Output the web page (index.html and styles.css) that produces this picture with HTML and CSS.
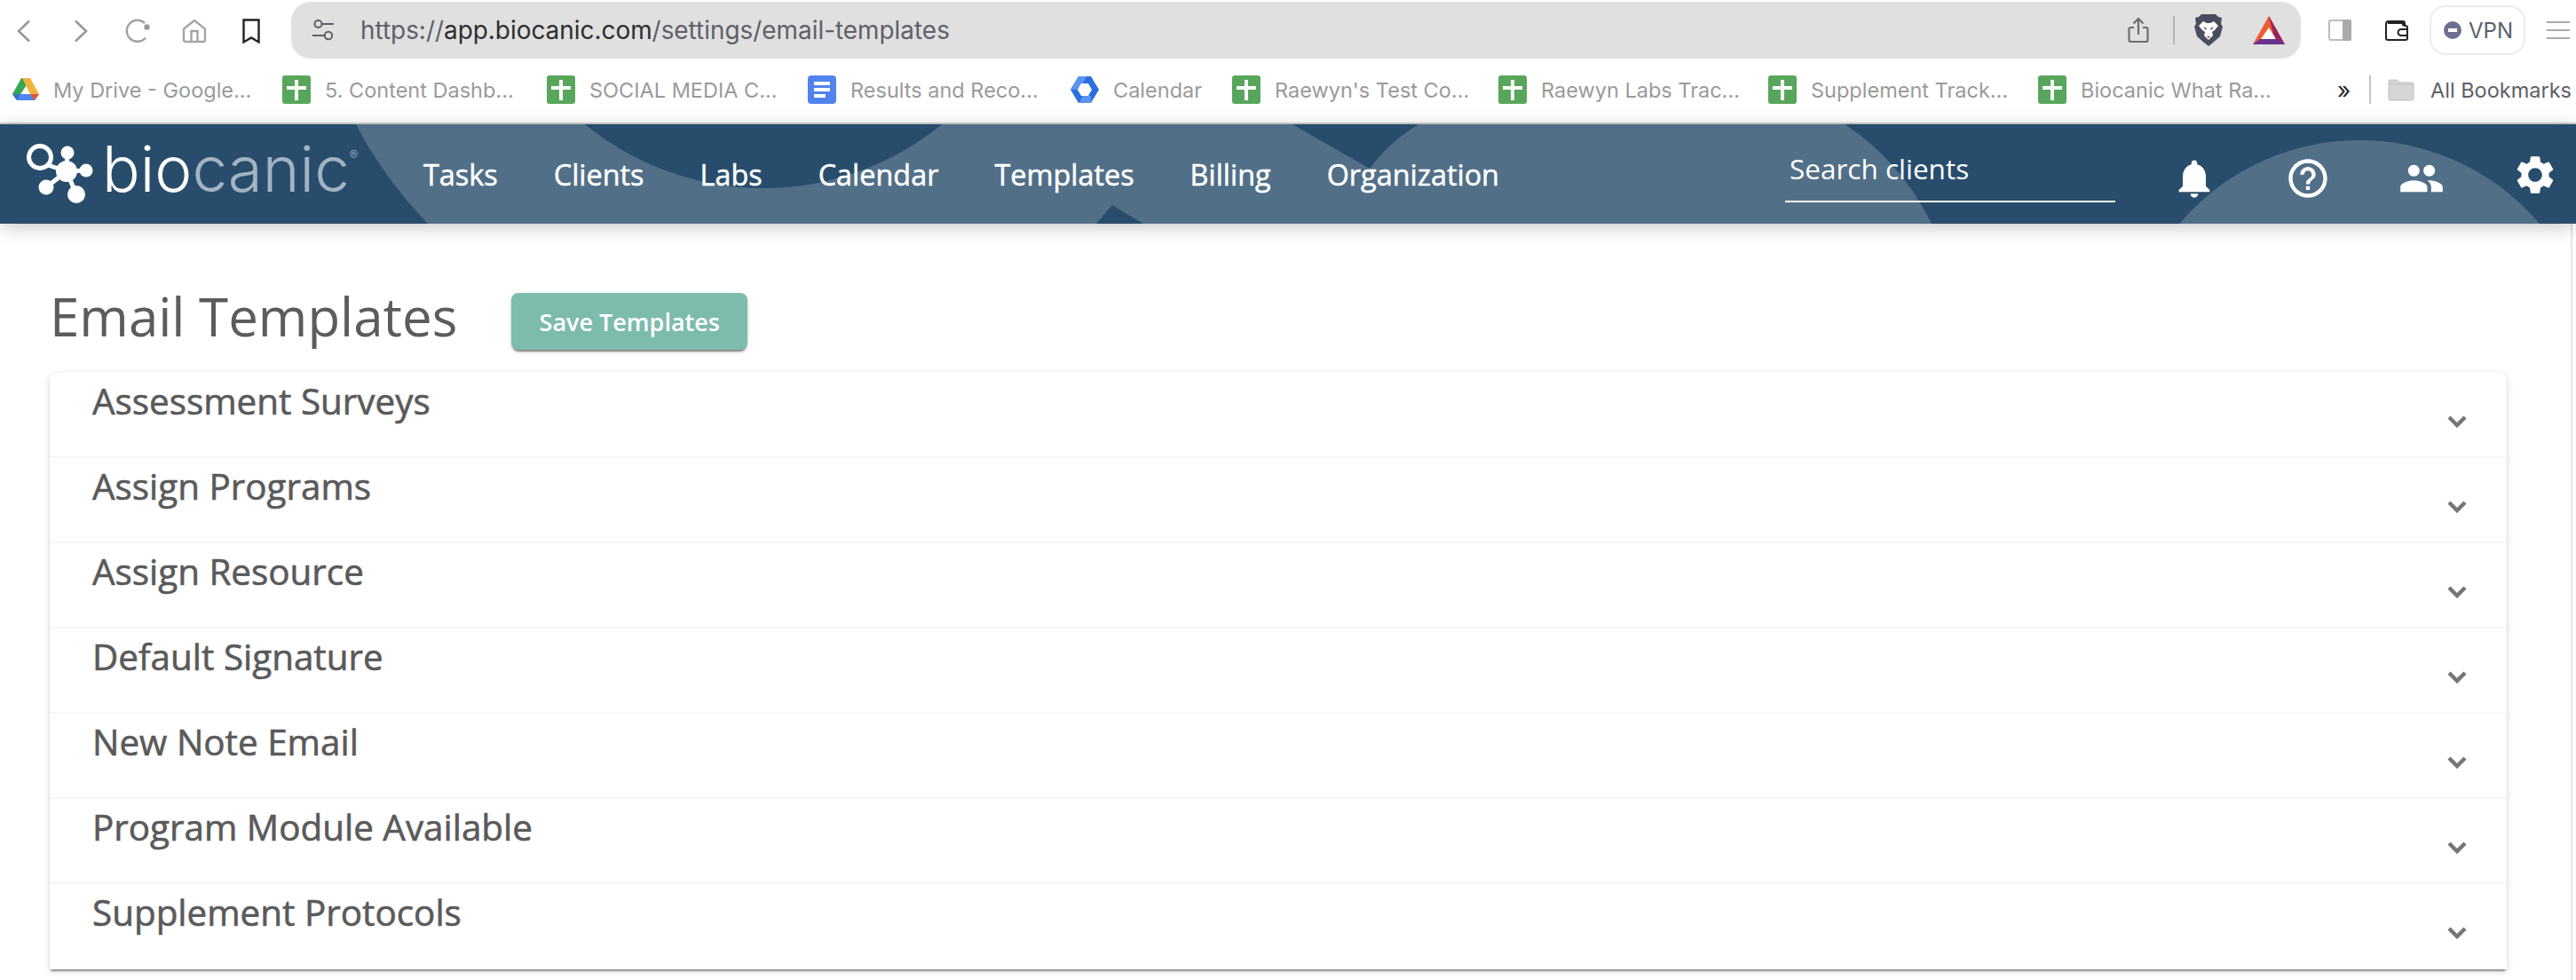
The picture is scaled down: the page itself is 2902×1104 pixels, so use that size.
FILE: index.html
```html
<!DOCTYPE html>
<html lang="en">
<head>
<meta charset="utf-8">
<title>Email Templates</title>
<link rel="stylesheet" href="styles.css">
</head>
<body>
<svg class="defs" width="0" height="0" aria-hidden="true">
  <symbol id="sheet" viewBox="0 0 32 32"><rect width="32" height="32" rx="3" fill="#58a65c"/><path d="M14 5h4v7h9v4h-9v12h-4V16H5v-4h9z" fill="#fff"/></symbol>
  <symbol id="chev" viewBox="0 0 22 14"><path d="M2 2l9 9 9-9" fill="none" stroke="#757575" stroke-width="4.4"/></symbol>
</svg>
<div class="toolbar">
  <svg class="tb" viewBox="0 0 30 30"><path d="M21 3.500L9 15l12 11.500" fill="none" stroke="#999" stroke-width="2.600"/></svg>
  <svg class="tb" viewBox="0 0 30 30"><path d="M9 3.500L21 15 9 26.500" fill="none" stroke="#999" stroke-width="2.600"/></svg>
  <svg class="tb" viewBox="0 0 30 30"><path d="M24 22.500A12 12 0 1 1 23 6" fill="none" stroke="#a0a0a0" stroke-width="2.400"/><circle cx="25.500" cy="10.500" r="3.200" fill="#999"/></svg>
  <svg class="tb" viewBox="0 0 30 30"><path d="M3 12.500L15 3l12 9.500V25a2 2 0 0 1-2 2H5a2 2 0 0 1-2-2zM11.500 27V15h7v12" fill="none" stroke="#a5a5a5" stroke-width="2.400"/></svg>
  <svg class="tb" viewBox="0 0 30 30"><path d="M6.500 2.500h17v25L15 22.500l-8.500 5z" fill="none" stroke="#222" stroke-width="2.400"/></svg>
  <div class="urlbar">
    <svg class="tune" viewBox="0 0 24 24"><circle cx="6.500" cy="5" r="4" fill="none" stroke="#5f6068" stroke-width="2"/><path d="M11 5h13M0 18h13" stroke="#5f6068" stroke-width="2"/><circle cx="18" cy="18" r="4.200" fill="none" stroke="#5f6068" stroke-width="2"/></svg>
    <div class="url"><span>https://</span><b>app.biocanic.com</b><span>/settings/email-templates</span></div>
    <div class="url-right">
      <svg class="share" viewBox="0 0 24 30"><path d="M7 12H3.500A2 2 0 0 0 1.500 14v12a2 2 0 0 0 2 2h17a2 2 0 0 0 2-2V14a2 2 0 0 0-2-2H17M12 20V2M6.500 7.500L12 2l5.500 5.500" fill="none" stroke="#6d6d6d" stroke-width="2.200"/></svg>
      <span class="sep"></span>
      <svg class="brave" viewBox="0 0 32 36"><path d="M8 0h16l3 3 4 1-1 7 2 3-3 11-8 7-5 4-5-4-8-7L0 14l2-3-1-7 4-1z" fill="#4a4c60"/><path d="M5 13l5-5 4 2h4l4-2 5 5-4 5-3 2 1 4-5 5-5-5 1-4-3-2z" fill="#fff"/><path d="M10 14l4 2-1 2zM22 14l-4 2 1 2zM14 25h4l-2 2z" fill="#4a4c60"/></svg>
      <svg class="bat" viewBox="0 0 36 32"><path d="M18 0L0 32h36z" fill="#f05a35"/><path d="M18 0l18 32H26z" fill="#97245c"/><path d="M0 32l8-6h20l8 6z" fill="#65308f"/><path d="M18 13l8 13H9z" fill="#fff"/></svg>
    </div>
  </div>
  <svg class="side" viewBox="0 0 26 24"><rect x="1" y="1" width="24" height="22" rx="2" fill="#fff" stroke="#bbb" stroke-width="2"/><rect x="16" y="0" width="10" height="24" rx="2" fill="#aaa"/></svg>
  <svg class="wallet" viewBox="0 0 26 24"><path d="M3 4h17v3M3 23a2 2 0 0 1-2-2V5a3 3 0 0 1 3-3h16a2 2 0 0 1 2 2v3h1a2 2 0 0 1 2 2v12a2 2 0 0 1-2 2zM25 11h-7a3 3 0 0 0 0 7h7" fill="none" stroke="#222" stroke-width="2"/></svg>
  <div class="vpn"><span class="vpn-dot"></span><span>VPN</span></div>
  <div class="burger"><i></i><i></i><i></i></div>
</div>
<div class="bookmarks">
  <a class="bm w-drive">
    <svg class="bm-icon" viewBox="0 0 32 32"><path d="M11 3h10l-5 9-5 0z" fill="#2f9e52"/><path d="M11 3L1 21l5 7 10-16z" fill="#34a853"/><path d="M21 3l10 18H21L12 3z" fill="#f2b33d"/><path d="M6 28l5-7h20l-5 7z" fill="#4d86ee"/><path d="M31 21l-5 7-5-7z" fill="#e2553f"/><path d="M1 21h10l-5 7z" fill="#3b6fd0"/></svg>
    <span>My Drive - Google...</span></a>
  <a class="bm w-a"><svg class="bm-icon"><use href="#sheet"/></svg><span>5. Content Dashb...</span></a>
  <a class="bm w-b"><svg class="bm-icon"><use href="#sheet"/></svg><span>SOCIAL MEDIA C...</span></a>
  <a class="bm w-c"><svg class="bm-icon" viewBox="0 0 32 32"><rect width="32" height="32" rx="4" fill="#5083ee"/><path d="M7 7h18v4H7zM7 14h18v4H7zM7 21h13v4H7z" fill="#fff"/></svg><span>Results and Reco...</span></a>
  <a class="bm w-d"><svg class="bm-icon" viewBox="0 0 32 32"><path d="M9 1h14l9 15-9 15H9L0 16z" fill="#2a6fe0"/><path d="M0 16L9 1h9l-4 8-5 7zM9 31l5-8h9v8z" fill="#5c93f0"/><path d="M12 9h8l4 7-4 7h-8l-4-7z" fill="#fff"/></svg><span>Calendar</span></a>
  <a class="bm w-e"><svg class="bm-icon"><use href="#sheet"/></svg><span>Raewyn's Test Co...</span></a>
  <a class="bm w-f"><svg class="bm-icon"><use href="#sheet"/></svg><span>Raewyn Labs Trac...</span></a>
  <a class="bm w-g"><svg class="bm-icon"><use href="#sheet"/></svg><span>Supplement Track...</span></a>
  <a class="bm w-h"><svg class="bm-icon"><use href="#sheet"/></svg><span>Biocanic What Ra...</span></a>
  <span class="more">»</span>
  <span class="bm-sep"></span>
  <svg class="folder" viewBox="0 0 30 26"><path d="M1 4a2 2 0 0 1 2-2h7l3 3h14a2 2 0 0 1 2 2v16a2 2 0 0 1-2 2H3a2 2 0 0 1-2-2z" fill="#d6d6d6" stroke="#bdbdbd"/><path d="M1 7h28" stroke="#c4c4c4"/></svg>
  <span class="all">All Bookmarks</span>
</div>
<header class="appbar">
  <svg class="decor" viewBox="0 0 2902 112" aria-hidden="true">
    <path d="M401 0Q432 60 482 112H2176Q2140 40 2078 0z" fill="#526f88"/>
    <circle cx="860" cy="-245" r="317" fill="#284d6c"/>
    <path d="M1456 0H1598Q1565 20 1543 50zM1235 112L1253 91 1288 112z" fill="#284d6c"/>
    <circle cx="2658" cy="284" r="266" fill="#526f88"/>
  </svg>
  <div class="logo">
    <svg class="mark" viewBox="0 0 84 72" aria-hidden="true">
      <circle cx="15" cy="15" r="12.500" fill="none" stroke="#fff" stroke-width="5"/>
      <path d="M24 24L45 31M45 31L46 10M45 31L67 30M45 31L22 49M45 31L56 57" stroke="#fff" stroke-width="5"/>
      <circle cx="45" cy="31" r="12" fill="#fff"/><circle cx="46" cy="10" r="7.500" fill="#fff"/><circle cx="67" cy="30" r="7.500" fill="#fff"/><circle cx="22" cy="49" r="8.500" fill="#fff"/><circle cx="56" cy="57" r="10" fill="#fff"/>
    </svg>
    <div class="wordmark"><span class="w1">bio</span><span class="w2">canic</span><sup class="reg">®</sup></div>
  </div>
  <nav class="nav"><a>Tasks</a><a>Clients</a><a>Labs</a><a>Calendar</a><a>Templates</a><a>Billing</a><a>Organization</a></nav>
  <div class="search"><span>Search clients</span></div>
  <div class="actions">
    <svg viewBox="0 0 24 24"><path d="M12 22c1.100 0 2-.9 2-2h-4c0 1.100.9 2 2 2zm6-6v-5c0-3.070-1.630-5.640-4.500-6.320V4c0-.83-.67-1.500-1.500-1.500s-1.500.67-1.500 1.500v.68C7.640 5.360 6 7.920 6 11v5l-2 2v1h16v-1l-2-2z"/></svg>
    <svg viewBox="0 0 24 24"><path d="M11 18h2v-2h-2v2zm1-16C6.480 2 2 6.480 2 12s4.480 10 10 10 10-4.480 10-10S17.520 2 12 2zm0 18c-4.410 0-8-3.590-8-8s3.590-8 8-8 8 3.590 8 8-3.590 8-8 8zm0-14c-2.210 0-4 1.790-4 4h2c0-1.100.9-2 2-2s2 .9 2 2c0 2-3 1.750-3 5h2c0-2.250 3-2.500 3-5 0-2.210-1.790-4-4-4z"/></svg>
    <svg viewBox="0 0 24 24"><path d="M16 11c1.660 0 2.990-1.340 2.990-3S17.660 5 16 5c-1.660 0-3 1.340-3 3s1.340 3 3 3zm-8 0c1.660 0 2.990-1.340 2.990-3S9.660 5 8 5C6.340 5 5 6.340 5 8s1.340 3 3 3zm0 2c-2.330 0-7 1.170-7 3.500V19h14v-2.500c0-2.330-4.670-3.500-7-3.500zm8 0c-.29 0-.62.02-.97.05 1.160.84 1.970 1.970 1.970 3.450V19h6v-2.500c0-2.330-4.670-3.500-7-3.500z"/></svg>
    <svg class="gear" viewBox="0 0 24 24"><path d="M19.140 12.940c.04-.3.06-.61.06-.94 0-.32-.02-.64-.07-.94l2.030-1.580c.18-.14.23-.41.12-.61l-1.920-3.320c-.12-.22-.37-.29-.59-.22l-2.390.96c-.5-.38-1.030-.7-1.620-.94l-.36-2.540c-.04-.24-.24-.41-.48-.41h-3.840c-.24 0-.43.17-.47.41l-.36 2.540c-.59.24-1.130.57-1.620.94l-2.390-.96c-.22-.08-.47 0-.59.22L2.740 8.870c-.12.21-.08.47.12.61l2.030 1.580c-.05.3-.09.63-.09.94s.02.64.07.94l-2.030 1.580c-.18.14-.23.41-.12.61l1.920 3.320c.12.22.37.29.59.22l2.390-.96c.5.38 1.030.7 1.620.94l.36 2.540c.05.24.24.41.48.41h3.840c.24 0 .44-.17.47-.41l.36-2.540c.59-.24 1.130-.56 1.620-.94l2.390.96c.22.08.47 0 .59-.22l1.920-3.320c.12-.22.07-.47-.12-.61l-2.010-1.580zM12 15.600c-1.980 0-3.600-1.620-3.600-3.600s1.620-3.600 3.600-3.600 3.600 1.620 3.600 3.600-1.620 3.600-3.600 3.600z"/></svg>
  </div>
</header>
<div class="page">
  <main class="content">
    <div class="title-row">
      <h1>Email Templates</h1>
      <button class="save">Save Templates</button>
    </div>
    <section class="card">
      <div class="row"><h2>Assessment Surveys</h2><svg class="chev"><use href="#chev"/></svg></div>
      <div class="row"><h2>Assign Programs</h2><svg class="chev"><use href="#chev"/></svg></div>
      <div class="row"><h2>Assign Resource</h2><svg class="chev"><use href="#chev"/></svg></div>
      <div class="row"><h2>Default Signature</h2><svg class="chev"><use href="#chev"/></svg></div>
      <div class="row"><h2>New Note Email</h2><svg class="chev"><use href="#chev"/></svg></div>
      <div class="row"><h2>Program Module Available</h2><svg class="chev"><use href="#chev"/></svg></div>
      <div class="row"><h2>Supplement Protocols</h2><svg class="chev"><use href="#chev"/></svg></div>
    </section>
  </main>
  <div class="scrollbar"></div>
</div>
</body>
</html>
```
FILE: styles.css
```css
* { box-sizing: border-box; }
html, body { margin: 0; padding: 0; }
body {
  width: 2902px;
  height: 1104px;
  overflow: hidden;
  background: #fff;
  font-family: "Open Sans", "Noto Sans", sans-serif;
  display: flex;
  flex-direction: column;
}
.defs { position: absolute; }

/* browser toolbar */
.toolbar {
  height: 66px;
  flex: none;
  display: flex;
  align-items: flex-start;
  padding: 2px 0 0 12px;
  gap: 34px;
}
.tb { width: 30px; height: 30px; margin-top: 18px; flex: none; }
.urlbar {
  width: 2264px;
  height: 64px;
  margin-left: -4px;
  margin-right: -3px;
  background: #e0e0e0;
  border-radius: 22px;
  display: flex;
  align-items: center;
  padding: 0 18px 0 24px;
  flex: none;
}
.tune { width: 24px; height: 24px; flex: none; }
.url {
  margin-left: 30px;
  font-family: Inter, "Liberation Sans", sans-serif;
  font-size: 27.9px;
  color: #5f6068;
  white-space: nowrap;
}
.url b { font-weight: 400; color: #2e2e30; }
.url-right { margin-left: auto; display: flex; align-items: center; }
.share { width: 24px; height: 30px; }
.sep { width: 2px; height: 32px; background: #b5b5b5; margin-left: 27px; }
.brave { width: 32px; height: 36px; margin-left: 22px; }
.bat { width: 36px; height: 32px; margin-left: 34px; }
.side { width: 26px; height: 24px; margin-top: 20px; flex: none; }
.wallet { width: 26px; height: 24px; margin-top: 20px; margin-left: 4px; flex: none; }
.vpn {
  width: 108px;
  height: 56px;
  margin-top: 4px;
  margin-left: -10px;
  border: 2px solid #ececec;
  border-radius: 18px;
  display: flex;
  align-items: center;
  padding-left: 14px;
  gap: 8px;
  font-family: Inter, "Liberation Sans", sans-serif;
  font-size: 24px;
  color: #5b5f6b;
  flex: none;
}
.vpn-dot { width: 20px; height: 20px; border-radius: 50%; background: #6e7092; position: relative; flex: none; }
.vpn-dot::after { content: ""; position: absolute; left: 5px; right: 5px; top: 8px; height: 4px; background: #fff; }
.burger { margin-left: -10px; margin-top: 22px; width: 26px; display: flex; flex-direction: column; gap: 7px; flex: none; }
.burger i { display: block; height: 2px; background: #aaa; }

/* bookmarks bar */
.bookmarks {
  height: 74px;
  flex: none;
  display: flex;
  align-items: center;
  padding: 0 0 2px 13px;
  border-bottom: 2px solid #d0d0d0;
  font-family: Inter, "Liberation Sans", sans-serif;
  font-size: 23.5px;
  color: #9a9a9a;
  white-space: nowrap;
}
.bm { display: flex; align-items: center; gap: 16px; flex: none; }
.w-drive { width: 305px; gap: 15px; }
.bm-icon { width: 32px; height: 32px; flex: none; }
.w-a { width: 298px; }
.w-b { width: 294px; }
.w-c { width: 296px; }
.w-d { width: 182px; }
.w-e { width: 300px; }
.w-f { width: 304px; }
.w-g { width: 304px; }
.w-h { width: 337px; }
.more { color: #222; font-size: 26px; width: 36px; }
.bm-sep { width: 2px; height: 32px; background: #c4c4c4; flex: none; }
.folder { width: 30px; height: 26px; margin-left: 19px; flex: none; }
.all { margin-left: 18px; color: #5f6068; }

/* app header */
.appbar {
  position: relative;
  z-index: 2;
  height: 112px;
  flex: none;
  background: #284d6c;
  color: #fff;
  display: flex;
  align-items: center;
  box-shadow: 0 4px 20px rgba(0, 0, 0, .22);
}
.decor { position: absolute; inset: 0; width: 2902px; height: 112px; }
.logo, .nav, .search, .actions { position: relative; }
.logo { display: flex; align-items: flex-start; width: 477px; height: 112px; padding-left: 30px; flex: none; }
.mark { width: 84px; height: 72px; margin-top: 22px; flex: none; }
.wordmark {
  margin-left: 1px;
  font-family: Inter, "Open Sans", sans-serif;
  font-weight: 300;
  font-size: 71px;
  line-height: 112px;
  margin-top: -6px;
  white-space: nowrap;
}
.w2 { color: #a3b3c0; }
.reg { font-size: 14px; color: #a3b3c0; vertical-align: 36px; line-height: 0; }
.nav { display: flex; gap: 63px; font-size: 32.4px; font-weight: 500; -webkit-text-stroke: .5px #fff; flex: none; }
.search {
  position: relative;
  align-self: flex-end;
  margin: 0 0 24px 322px;
  width: 372px;
  height: 58px;
  padding-left: 5px;
  border-bottom: 2px solid #fff;
  font-size: 31.5px;
  line-height: 40px;
  flex: none;
}
.actions { display: flex; gap: 76px; margin-left: 63px; margin-top: 10px; flex: none; }
.actions svg { width: 52px; height: 52px; fill: #fff; }
.gear { margin-top: -4px; }

/* page */
.page { flex: 1; display: flex; min-height: 0; }
.content { flex: 1; padding: 0 72px 0 56px; min-width: 0; }
.scrollbar { width: 2px; background: #e6e6e6; margin-right: 4px; flex: none; }
.title-row { display: flex; align-items: flex-start; height: 168px; padding-top: 62px; }
h1 { margin: 0; font-size: 60px; font-weight: 400; line-height: 84px; color: #5c5c5c; white-space: nowrap; }
.save {
  margin: 16px 0 0 61px;
  width: 266px;
  height: 64px;
  border: 0;
  border-radius: 8px;
  background: #7dbbad;
  color: #fff;
  font-family: inherit;
  font-size: 27px;
  font-weight: 600;
  box-shadow: 0 4px 2px -2px rgba(0,0,0,.35), 0 2px 2px rgba(0,0,0,.14), 0 2px 6px rgba(0,0,0,.12);
}
.card {
  border-radius: 8px 8px 0 0;
  background: #fff;
  box-shadow: 0 4px 2px -2px rgba(0,0,0,.3), 0 2px 2px rgba(0,0,0,.14), 0 2px 8px rgba(0,0,0,.14);
}
.row {
  height: 96px;
  padding-left: 48px;
  padding-right: 45px;
  border-bottom: 2px solid #f6f6f6;
  display: flex;
  justify-content: space-between;
}
.row:last-child { border-bottom: 0; }
h2 { margin: 0; font-size: 40.4px; font-weight: 500; -webkit-text-stroke: .6px #5a5a5a; line-height: 64px; color: #5a5a5a; }
.chev { width: 22px; height: 14px; margin-top: 48px; flex: none; }
```
